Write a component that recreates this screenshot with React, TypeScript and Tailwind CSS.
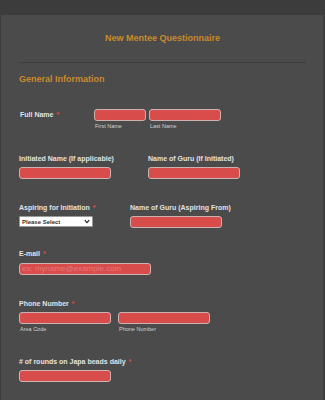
import React from "react";

const Star = () => <span className="text-[#e04848] ml-[3px]">*</span>;

const Input = ({ w, placeholder }: { w: string; placeholder?: string }) => (
  <div
    className={`${w} h-[12px] bg-[#d94c4c] border border-[#cdb2b2] rounded-[3px] flex items-center px-[2px] text-[8px] leading-none text-[#e47a7a] whitespace-nowrap overflow-hidden`}
  >
    {placeholder}
  </div>
);

const Label = ({ children, star }: { children: React.ReactNode; star?: boolean }) => (
  <div className="text-[7px] leading-[9px] font-bold text-[#e2e2e2] whitespace-nowrap">
    {children}
    {star && <Star />}
  </div>
);

const Sub = ({ children, w }: { children: React.ReactNode; w: string }) => (
  <div className={`${w} text-[5.5px] leading-[8px] text-[#d2d2d2] pl-[1px]`}>{children}</div>
);

export default function App() {
  return (
    <div
      className="w-[325px] h-[400px] overflow-hidden bg-[#3c3c3c] pt-[15px] pl-[1px] pr-[2px]"
      style={{ fontFamily: '"Liberation Sans", Arial, sans-serif' }}
    >
      <div className="h-full bg-[#4b4b4b] px-[18px] flex flex-col">
        <div className="mt-[18px] text-center text-[9px] leading-[11px] font-bold text-[#c98a2c] pl-[1px]">
          New Mentee Questionnaire
        </div>
        <div className="mt-[18px] h-px bg-[#3e3e3e] mr-[-1px]" />
        <div className="mt-[11px] text-[9px] leading-[11px] font-bold text-[#c98a2c]">
          General Information
        </div>

        {/* Full name */}
        <div className="mt-[24px] flex">
          <div className="w-[75px] pl-[1px] pt-[1px]">
            <Label star>Full Name</Label>
          </div>
          <div className="flex flex-col">
            <div className="flex gap-[3px]">
              <Input w="w-[52px]" />
              <Input w="w-[72px]" />
            </div>
            <div className="flex gap-[3px] mt-[1px]">
              <Sub w="w-[52px]">First Name</Sub>
              <Sub w="w-[72px]">Last Name</Sub>
            </div>
          </div>
        </div>

        {/* Initiated */}
        <div className="mt-[24px] flex">
          <div className="w-[129px] flex flex-col gap-[4px]">
            <Label>Initiated Name (If applicable)</Label>
            <Input w="w-[92px]" />
          </div>
          <div className="flex flex-col gap-[4px]">
            <Label>Name of Guru (If Initiated)</Label>
            <Input w="w-[92px]" />
          </div>
        </div>

        {/* Aspiring */}
        <div className="mt-[24px] flex">
          <div className="w-[111px] flex flex-col gap-[4px]">
            <Label star>Aspiring for Initiation</Label>
            <div className="w-[74px] h-[11px] bg-white border border-[#9a9a9a] rounded-[1px] flex items-center justify-between px-[2px]">
              <span className="text-[6px] leading-none text-[#333] font-bold">Please Select</span>
              <svg width="6" height="5" viewBox="0 0 6 5">
                <path d="M0.8 1.2 L3 3.6 L5.2 1.2" stroke="#222" strokeWidth="1.2" fill="none" />
              </svg>
            </div>
          </div>
          <div className="flex flex-col gap-[4px]">
            <Label>Name of Guru (Aspiring From)</Label>
            <Input w="w-[92px]" />
          </div>
        </div>

        {/* Email */}
        <div className="mt-[21px] flex flex-col gap-[5px]">
          <Label star>E-mail</Label>
          <Input w="w-[132px]" placeholder="ex: myname@example.com" />
        </div>

        {/* Phone */}
        <div className="mt-[24px] flex flex-col gap-[4px]">
          <Label star>Phone Number</Label>
          <div className="flex flex-col">
            <div className="flex gap-[7px]">
              <Input w="w-[92px]" />
              <Input w="w-[92px]" />
            </div>
            <div className="flex gap-[7px] mt-[1px]">
              <Sub w="w-[92px]">Area Code</Sub>
              <Sub w="w-[92px]">Phone Number</Sub>
            </div>
          </div>
        </div>

        {/* Rounds */}
        <div className="mt-[24px] flex flex-col gap-[4px]">
          <Label star># of rounds on Japa beads daily</Label>
          <Input w="w-[92px]" />
        </div>
      </div>
    </div>
  );
}
